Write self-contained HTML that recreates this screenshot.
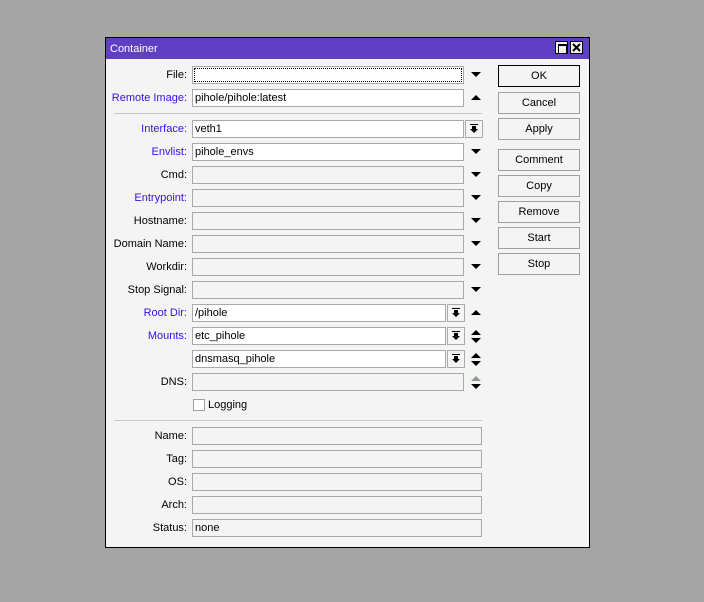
<!DOCTYPE html>
<html><head><style>
body{margin:0;width:704px;height:602px;background:#a5a5a5;font-family:"Liberation Sans",sans-serif;font-size:11px;position:relative;overflow:hidden}
.win{position:absolute;left:105px;top:37px;width:483px;height:509px;border:1px solid #000;background:#f4f4f4;box-sizing:content-box}
.title{position:absolute;left:0;top:0;width:483px;height:21px;background:#5f3fc4;color:#fff;font-size:11px;line-height:22px;padding-left:4px;box-sizing:border-box}
.tb{position:absolute;top:3px;width:13px;height:13px;background:#f0f0f0;border:1px solid #000;box-sizing:border-box}
.a{position:absolute}
.lbl{position:absolute;right:402px;width:120px;text-align:right;color:#000;height:18px;line-height:21px}
.blue{color:#3a10e0}
.in{position:absolute;height:18px;border:1px solid #a9a9a9;background:#fff;box-sizing:border-box;line-height:16px;padding-left:2px}
.dis{background:#f4f4f4}
.sel{position:absolute;width:18px;height:18px;border:1px solid #a9a9a9;background:#f4f4f4;box-sizing:border-box}
.btn{position:absolute;left:392px;width:82px;height:22px;border:1px solid #a0a0a0;background:#f4f4f4;box-sizing:border-box;text-align:center;line-height:20px}
.sep{position:absolute;left:8px;width:368px;height:1px;background:#c8c8c8}
</style></head><body>
<div class="win">
<div class="title">Container</div>
<div class="tb" style="left:449px"><div class="a" style="left:2px;top:2px;width:7px;height:7px;border:1px solid #000;border-top-width:2px;box-sizing:content-box"></div></div>
<div class="tb" style="left:464px"><svg width="11" height="11" style="position:absolute;left:0;top:0"><path d="M2,2 L9,9 M9,2 L2,9" stroke="#000" stroke-width="2"/></svg></div>

<div class="lbl" style="top:27px">File:</div>
<div class="in" style="left:86px;top:28px;width:272px"><div class="a" style="left:1px;top:1px;right:1px;bottom:1px;border:1px dotted #000"></div></div>
<div class="lbl blue" style="top:50px">Remote Image:</div>
<div class="in" style="left:86px;top:51px;width:272px">pihole/pihole:latest</div>
<div class="sep" style="top:75px"></div>
<div class="lbl blue" style="top:81px">Interface:</div>
<div class="in" style="left:86px;top:82px;width:272px">veth1</div>
<div class="sel" style="left:359px;top:82px"></div>
<div class="lbl blue" style="top:104px">Envlist:</div>
<div class="in" style="left:86px;top:105px;width:272px">pihole_envs</div>
<div class="lbl" style="top:127px">Cmd:</div>
<div class="in dis" style="left:86px;top:128px;width:272px"></div>
<div class="lbl blue" style="top:150px">Entrypoint:</div>
<div class="in dis" style="left:86px;top:151px;width:272px"></div>
<div class="lbl" style="top:173px">Hostname:</div>
<div class="in dis" style="left:86px;top:174px;width:272px"></div>
<div class="lbl" style="top:196px">Domain Name:</div>
<div class="in dis" style="left:86px;top:197px;width:272px"></div>
<div class="lbl" style="top:219px">Workdir:</div>
<div class="in dis" style="left:86px;top:220px;width:272px"></div>
<div class="lbl" style="top:242px">Stop Signal:</div>
<div class="in dis" style="left:86px;top:243px;width:272px"></div>
<div class="lbl blue" style="top:265px">Root Dir:</div>
<div class="in" style="left:86px;top:266px;width:254px">/pihole</div>
<div class="sel" style="left:341px;top:266px"></div>
<div class="lbl blue" style="top:288px">Mounts:</div>
<div class="in" style="left:86px;top:289px;width:254px">etc_pihole</div>
<div class="sel" style="left:341px;top:289px"></div>
<div class="in" style="left:86px;top:312px;width:254px">dnsmasq_pihole</div>
<div class="sel" style="left:341px;top:312px"></div>
<div class="lbl" style="top:334px">DNS:</div>
<div class="in dis" style="left:86px;top:335px;width:272px"></div>
<div class="a" style="left:87px;top:361px;width:12px;height:12px;border:1px solid #a0a0a0;background:#fff;box-sizing:border-box"></div>
<div class="a" style="left:102px;top:358px;line-height:18px">Logging</div>
<div class="sep" style="top:382px"></div>
<div class="lbl" style="top:388px">Name:</div>
<div class="in dis" style="left:86px;top:389px;width:290px"></div>
<div class="lbl" style="top:411px">Tag:</div>
<div class="in dis" style="left:86px;top:412px;width:290px"></div>
<div class="lbl" style="top:434px">OS:</div>
<div class="in dis" style="left:86px;top:435px;width:290px"></div>
<div class="lbl" style="top:457px">Arch:</div>
<div class="in dis" style="left:86px;top:458px;width:290px"></div>
<div class="lbl" style="top:480px">Status:</div>
<div class="in dis" style="left:86px;top:481px;width:290px">none</div>

<div class="btn" style="top:27px;border:1px solid #000">OK</div>
<div class="btn" style="top:54px">Cancel</div>
<div class="btn" style="top:80px">Apply</div>
<div class="btn" style="top:111px">Comment</div>
<div class="btn" style="top:137px">Copy</div>
<div class="btn" style="top:163px">Remove</div>
<div class="btn" style="top:189px">Start</div>
<div class="btn" style="top:215px">Stop</div>

<svg class="a" style="left:0;top:0" width="483" height="509">
<defs>
<path id="dn" d="M-5,-2 H5 L0,3 Z"/>
<path id="up" d="M-5,2 H5 L0,-3 Z"/>
<g id="sb"><rect x="-4" y="-5" width="8" height="1"/><rect x="-2" y="-3" width="4" height="3"/><path d="M-4,0 H4 L0,4Z"/></g>
</defs>
<g fill="#000">
<use href="#dn" x="370" y="36"/>
<use href="#up" x="370" y="60"/>
<use href="#dn" x="370" y="113"/>
<use href="#dn" x="370" y="136"/>
<use href="#dn" x="370" y="159"/>
<use href="#dn" x="370" y="182"/>
<use href="#dn" x="370" y="205"/>
<use href="#dn" x="370" y="228"/>
<use href="#dn" x="370" y="251"/>
<use href="#up" x="370" y="275"/>
<use href="#up" x="370" y="295"/><use href="#dn" x="370" y="302"/>
<use href="#up" x="370" y="318"/><use href="#dn" x="370" y="325"/>
<use href="#up" x="370" y="341" fill="#909a90"/><use href="#dn" x="370" y="348"/>
<use href="#sb" x="368" y="91"/>
<use href="#sb" x="350" y="275"/>
<use href="#sb" x="350" y="298"/>
<use href="#sb" x="350" y="321"/>
</g>
</svg>
</div>
</body></html>
